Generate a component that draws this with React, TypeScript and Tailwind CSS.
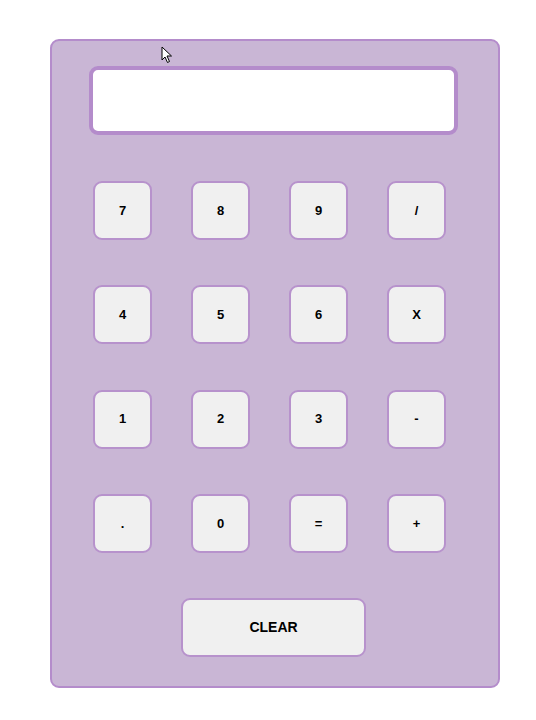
import React from "react";

const keys = ["7", "8", "9", "/", "4", "5", "6", "X", "1", "2", "3", "-", ".", "0", "=", "+"];

export default function App() {
  return (
    <div className="relative w-[536px] h-[720px] bg-white" style={{ fontFamily: '"Liberation Sans", Arial, sans-serif' }}>
      <div className="ml-[50px] pt-[39px]">
        <div className="w-[450px] h-[649px] border-2 border-[#b48ccb] bg-[#c9b6d5] rounded-[9px] box-border">
          <div className="ml-[37px] mt-[25px] w-[369px] h-[69px] border-[4px] border-[#b48ccb] rounded-[9px] bg-white box-border" />
          <div className="ml-[41px] mt-[46px] grid grid-cols-[repeat(4,59px)] gap-x-[39px] gap-y-[45.3px]">
            {keys.map((k) => (
              <div
                key={k}
                className="w-[59px] h-[59px] border-2 border-[#b792cc] bg-[#f0f0f0] rounded-[9px] flex items-center justify-center text-[13px] font-bold text-black box-border"
              >
                {k}
              </div>
            ))}
          </div>
          <div className="ml-[129px] mt-[45px] w-[185px] h-[59px] border-2 border-[#b792cc] bg-[#f0f0f0] rounded-[9px] flex items-center justify-center text-[14px] font-bold text-black box-border">
            CLEAR
          </div>
        </div>
      </div>
      <svg className="absolute left-[161px] top-[46px]" width="12" height="18" viewBox="0 0 12 18">
        <path d="M1 1 L1 14 L4 11 L6.5 16.5 L8.5 15.5 L6 10 L10.5 10 Z" fill="white" stroke="black" strokeWidth="1" strokeLinejoin="round" />
      </svg>
    </div>
  );
}
